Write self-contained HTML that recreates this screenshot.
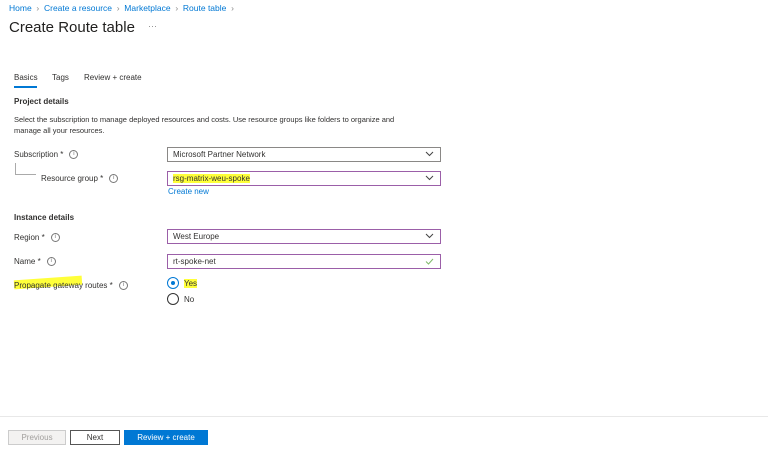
<!DOCTYPE html>
<html><head><style>
body{margin:0;width:768px;height:450px;background:#fff;font-family:"Liberation Sans",sans-serif;color:#323130;position:relative;overflow:hidden}
.a{position:absolute;white-space:nowrap}
.s{font-size:8px}
.bc{color:#0078d4;font-size:8.5px}
.field{position:absolute;left:167px;height:13px;border:1px solid #8a8886;font-size:8px;line-height:13px;box-sizing:content-box;padding-left:5px;width:267px}
.p{border-color:#9b5fa8}
.chev{position:absolute;right:6px;top:3px}
.i{display:inline-block;width:7px;height:7px;border:1px solid #777;border-radius:50%;font-size:5px;line-height:7px;text-align:center;vertical-align:middle;margin-left:6px;color:#555}
.hl{background:#ffff3a}
.req{color:#323130}
</style></head><body>
<div class="a bc" style="left:9px;top:3px">Home &nbsp;<span style="color:#888">›</span>&nbsp; Create a resource &nbsp;<span style="color:#888">›</span>&nbsp; Marketplace &nbsp;<span style="color:#888">›</span>&nbsp; Route table &nbsp;<span style="color:#888">›</span></div>
<div class="a" style="left:9px;top:19px;font-size:15px;color:#201f1e">Create Route table</div>
<div class="a" style="left:148px;top:21px;font-size:9px;color:#888">···</div>
<div class="a s" style="left:14px;top:73px">Basics</div>
<div class="a" style="left:14px;top:86px;width:23px;height:2px;background:#0078d4"></div>
<div class="a s" style="left:52px;top:73px">Tags</div>
<div class="a s" style="left:84px;top:73px">Review + create</div>
<div class="a s" style="left:14px;top:97px;font-weight:bold">Project details</div>
<div class="a" style="left:14px;top:114px;font-size:7.5px;line-height:11px">Select the subscription to manage deployed resources and costs. Use resource groups like folders to organize and<br>manage all your resources.</div>
<div class="a s" style="left:14px;top:150px">Subscription <span class="req">*</span><span class="i">i</span></div>
<div class="a" style="left:15px;top:163px;width:20px;height:11px;border-left:1px solid #aaa;border-bottom:1px solid #aaa"></div>
<div class="a s" style="left:41px;top:174px">Resource group <span class="req">*</span><span class="i">i</span></div>
<div class="field" style="top:147px">Microsoft Partner Network<svg class="chev" width="9" height="6"><path d="M1 1l3.5 3.5L8 1" stroke="#444" fill="none"/></svg></div>
<div class="field p" style="top:171px"><span class="hl">rsg-matrix-weu-spoke</span><svg class="chev" width="9" height="6"><path d="M1 1l3.5 3.5L8 1" stroke="#444" fill="none"/></svg></div>
<div class="a s" style="left:168px;top:187px;color:#0078d4">Create new</div>
<div class="a s" style="left:14px;top:213px;font-weight:bold">Instance details</div>
<div class="a s" style="left:14px;top:233px">Region <span class="req">*</span><span class="i">i</span></div>
<div class="field p" style="top:229px">West Europe<svg class="chev" width="9" height="6"><path d="M1 1l3.5 3.5L8 1" stroke="#444" fill="none"/></svg></div>
<div class="a s" style="left:14px;top:257px">Name <span class="req">*</span><span class="i">i</span></div>
<div class="field p" style="top:254px">rt-spoke-net<svg class="chev" width="9" height="7"><path d="M1 3.5l2.5 2.5L8 1" stroke="#7fba6a" fill="none"/></svg></div>
<div class="a" style="left:14px;top:278px;width:68px;height:9px;background:#ffff3a;transform:rotate(-4deg)"></div>
<div class="a s" style="left:14px;top:281px">Propagate gateway routes <span class="req">*</span><span class="i">i</span></div>
<div class="a" style="left:167px;top:277px;width:10px;height:10px;border:1px solid #0078d4;border-radius:50%"></div>
<div class="a" style="left:171px;top:281px;width:4px;height:4px;background:#0078d4;border-radius:50%"></div>
<div class="a s hl" style="left:184px;top:279px">Yes</div>
<div class="a" style="left:167px;top:293px;width:10px;height:10px;border:1px solid #333;border-radius:50%"></div>
<div class="a s" style="left:184px;top:295px">No</div>
<div class="a" style="left:0;top:416px;width:768px;height:1px;background:#e8e8e8"></div>
<div class="a s" style="left:8px;top:430px;width:56px;height:13px;border:1px solid #ccc;background:#f3f2f1;color:#a19f9d;text-align:center;line-height:13px">Previous</div>
<div class="a s" style="left:70px;top:430px;width:48px;height:13px;border:1px solid #555;text-align:center;line-height:13px">Next</div>
<div class="a s" style="left:124px;top:430px;width:84px;height:15px;background:#0078d4;color:#fff;text-align:center;line-height:15px">Review + create</div>
</body></html>
